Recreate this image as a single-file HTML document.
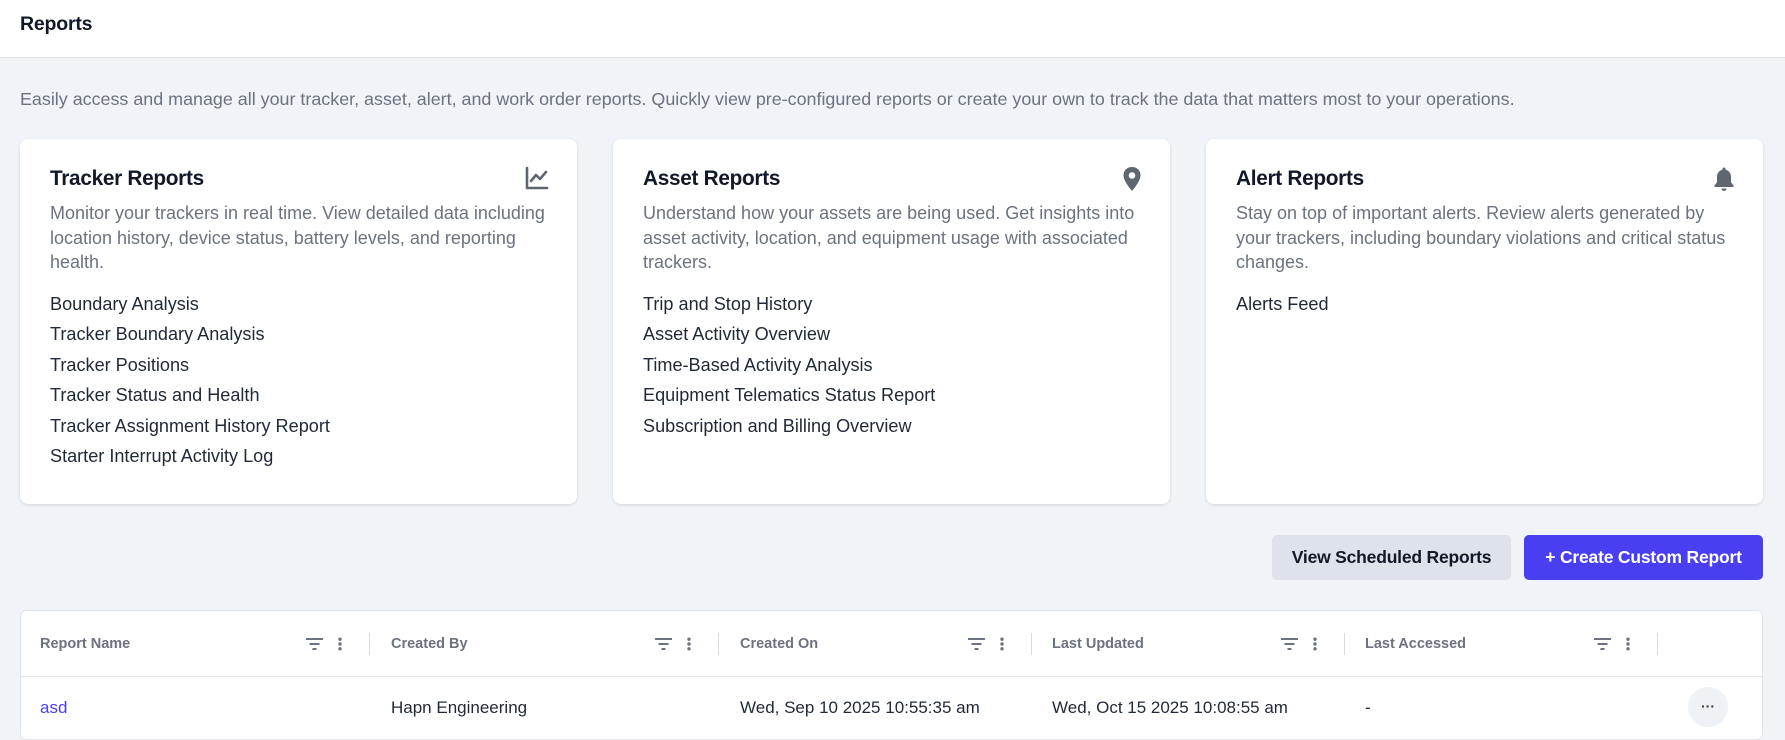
<!DOCTYPE html>
<html><head><meta charset="utf-8"><style>
*{box-sizing:border-box;margin:0;padding:0}
body{width:1785px;height:730px;overflow:hidden;background:#f0f3f7;font-family:"Liberation Sans",sans-serif;position:relative}
.hdr{position:absolute;left:0;top:0;width:1785px;height:58px;background:#fff;border-bottom:1px solid #dfe3e8}
.hdr span{position:absolute;left:20px;top:13px;font-size:19.5px;font-weight:700;color:#111827;letter-spacing:-0.2px}
.desc{position:absolute;left:20px;top:89px;font-size:17.9px;color:#6b7280;white-space:nowrap}
.card{position:absolute;top:139px;height:365px;width:557px;background:#fff;border-radius:8px;box-shadow:0 1px 3px rgba(0,0,0,0.12)}
.card h3{position:absolute;left:30px;top:28px;font-size:20.8px;font-weight:700;color:#111827;letter-spacing:-0.3px}
.card .p{position:absolute;left:30px;top:62px;width:505px;font-size:18px;line-height:24.5px;color:#6b7280}
.card ul{position:absolute;left:30px;top:150px;list-style:none}
.card li{font-size:18.1px;line-height:30.4px;color:#1f2937}
.card svg.ic{position:absolute;right:28px;top:27px}
.btn{position:absolute;top:535px;height:45px;border-radius:5px;font-size:17.5px;font-weight:700;text-align:center;line-height:45px;letter-spacing:-0.2px}
.tbl{position:absolute;left:20px;top:610px;width:1743px;height:130px;background:#fff;border:1px solid #e1e5ea;border-radius:6px}
.th{position:absolute;top:0;height:66px;width:1741px;border-bottom:1px solid #e1e5ea}
.h{position:absolute;top:25px;font-size:14.5px;color:#6b7280;font-weight:700}
.sep{position:absolute;top:22px;width:1px;height:22px;background:#d9dde3}
.td{position:absolute;top:87px;font-size:17px;color:#1f2937}
</style></head><body>
<div class="hdr"><span>Reports</span></div>
<div class="desc">Easily access and manage all your tracker, asset, alert, and work order reports. Quickly view pre-configured reports or create your own to track the data that matters most to your operations.</div>

<div class="card" style="left:20px">
<h3>Tracker Reports</h3>
<svg class="ic" width="24" height="24" viewBox="0 0 24 24" fill="none" stroke="#5f6670" stroke-width="2.6" stroke-linecap="round" stroke-linejoin="round"><path d="M2 2v20h20"/><path d="M6 15l5-6 4 4 6-7"/></svg>
<div class="p">Monitor your trackers in real time. View detailed data including location history, device status, battery levels, and reporting health.</div>
<ul><li>Boundary Analysis</li><li>Tracker Boundary Analysis</li><li>Tracker Positions</li><li>Tracker Status and Health</li><li>Tracker Assignment History Report</li><li>Starter Interrupt Activity Log</li></ul>
</div>
<div class="card" style="left:613px">
<h3>Asset Reports</h3>
<svg class="ic" width="20" height="26" viewBox="0 0 20 26"><path d="M10 1C5 1 1.5 4.7 1.5 9.3 1.5 15.5 10 25 10 25s8.5-9.5 8.5-15.7C18.5 4.7 15 1 10 1z" fill="#5f6670"/><circle cx="10" cy="9.5" r="3.3" fill="#fff"/></svg>
<div class="p">Understand how your assets are being used. Get insights into asset activity, location, and equipment usage with associated trackers.</div>
<ul><li>Trip and Stop History</li><li>Asset Activity Overview</li><li>Time-Based Activity Analysis</li><li>Equipment Telematics Status Report</li><li>Subscription and Billing Overview</li></ul>
</div>
<div class="card" style="left:1206px">
<h3>Alert Reports</h3>
<svg class="ic" width="22" height="26" viewBox="0 0 22 26"><path d="M11 1.5c-.9 0-1.6.7-1.6 1.6v.6C5.9 4.5 4 7.4 4 10.8v5.5L1.5 19.5v1.5h19v-1.5L18 16.3v-5.5c0-3.4-1.9-6.3-5.4-7.1v-.6c0-.9-.7-1.6-1.6-1.6z" fill="#5f6670"/><path d="M8.5 22.5h5a2.5 2.5 0 0 1-5 0z" fill="#5f6670"/></svg>
<div class="p">Stay on top of important alerts. Review alerts generated by your trackers, including boundary violations and critical status changes.</div>
<ul><li>Alerts Feed</li></ul>
</div>

<div class="btn" style="left:1272px;width:239px;background:#dde2eb;color:#111827">View Scheduled Reports</div>
<div class="btn" style="left:1524px;width:239px;background:#4a3ff0;color:#fff">+ Create Custom Report</div>

<div class="tbl">
<div class="th"></div>
<div class="h" style="left:19px">Report Name</div>
<div class="h" style="left:370px">Created By</div>
<div class="h" style="left:719px">Created On</div>
<div class="h" style="left:1031px">Last Updated</div>
<div class="h" style="left:1344px">Last Accessed</div>
<svg width="1741" height="66" style="position:absolute;left:0;top:0">
<defs><g id="fi"><rect x="0" y="0" width="17" height="2"/><rect x="3.5" y="5" width="10" height="2"/><rect x="6.5" y="10" width="4" height="2"/><circle cx="34" cy="1.2" r="1.7"/><circle cx="34" cy="6" r="1.7"/><circle cx="34" cy="10.8" r="1.7"/></g></defs>
<g fill="#6b7280">
<use href="#fi" transform="translate(285,27)"/>
<use href="#fi" transform="translate(634,27)"/>
<use href="#fi" transform="translate(947,27)"/>
<use href="#fi" transform="translate(1260,27)"/>
<use href="#fi" transform="translate(1573,27)"/>
</g></svg>
<div class="sep" style="left:348px"></div>
<div class="sep" style="left:697px"></div>
<div class="sep" style="left:1010px"></div>
<div class="sep" style="left:1323px"></div>
<div class="sep" style="left:1636px"></div>
<div class="td" style="left:19px;color:#4a3ff0">asd</div>
<div class="td" style="left:370px">Hapn Engineering</div>
<div class="td" style="left:719px">Wed, Sep 10 2025 10:55:35 am</div>
<div class="td" style="left:1031px">Wed, Oct 15 2025 10:08:55 am</div>
<div class="td" style="left:1344px">-</div>
<div style="position:absolute;left:1667px;top:76px;width:40px;height:40px;border-radius:50%;background:#eef1f5;text-align:center;line-height:38px;font-size:14px;font-weight:700;color:#333">···</div>
</div>
</body></html>
